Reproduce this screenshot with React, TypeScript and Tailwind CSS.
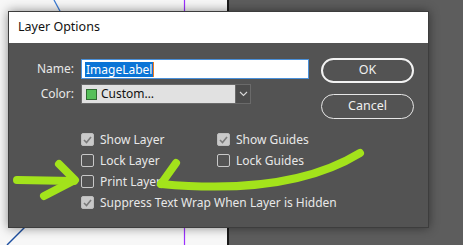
import React from "react";

function Check({ checked }: { checked: boolean }) {
  return checked ? (
    <span className="w-[13px] h-[13px] rounded-[2px] bg-[#c9c9c9] border border-[#bdbdbd] flex items-center justify-center shrink-0">
      <svg width="9" height="8" viewBox="0 0 9 8">
        <polyline points="1,4 3.5,6.5 8,1" fill="none" stroke="#7a7a7a" strokeWidth="1.6" />
      </svg>
    </span>
  ) : (
    <span className="w-[13px] h-[13px] rounded-[2px] border border-[#c8c8c8] shrink-0" />
  );
}

function Row({ checked, label }: { checked: boolean; label: string }) {
  return (
    <div className="h-[21px] flex items-center gap-[6px]">
      <Check checked={checked} />
      <span className="text-[12px] text-[#e8e8e8] leading-none whitespace-nowrap">{label}</span>
    </div>
  );
}

export default function App() {
  return (
    <div
      className="relative w-[463px] h-[245px] overflow-hidden"
      style={{ fontFamily: '"Noto Sans", "Open Sans", sans-serif' }}
    >
      <div className="flex h-full">
        <div className="w-[227px] bg-[#f7f7f7]" />
        <div className="w-[2px] bg-[#1a1a1a]" />
        <div className="flex-1 bg-[#5d5d5d]" />
      </div>
      <svg className="absolute inset-0" width="463" height="245">
        <line x1="184.5" y1="0" x2="184.5" y2="245" stroke="#9b30ff" strokeWidth="1.2" />
        <path d="M54 0 L61 13" stroke="#3a7bd5" strokeWidth="1.3" fill="none" />
        <path d="M26 226 L7 245" stroke="#1d4fa0" strokeWidth="1.4" fill="none" />
      </svg>

      <div className="absolute left-[8px] top-[11px] w-[421px] h-[217px] flex flex-col border border-[#3d3d3d] shadow-[0_0_10px_rgba(0,0,0,0.45)]">
        <div className="h-[31px] bg-white flex items-center pl-[9px] shrink-0">
          <span className="text-[12.5px] text-[#111]">Layer Options</span>
        </div>
        <div className="flex-1 bg-[#535353] flex flex-col">
          <div className="flex">
            <div className="w-[300px] flex flex-col pt-[16px]">
              <div className="flex items-center gap-[7px] h-[20px]">
                <span className="w-[65px] text-right text-[12px] text-[#e8e8e8]">Name:</span>
                <div className="w-[228px] h-[20px] bg-white border border-[#4a90d9] flex items-center pl-[3px]">
                  <span className="bg-[#0a74d6] text-white text-[12px] leading-[15px] px-[1px]">ImageLabel</span>
                  <span className="w-[1px] h-[15px] bg-[#f07a1a]" />
                </div>
              </div>
              <div className="flex items-center gap-[7px] h-[20px] mt-[5px]">
                <span className="w-[65px] text-right text-[12px] text-[#e8e8e8]">Color:</span>
                <div className="w-[170px] h-[20px] bg-[#e1e1e1] border border-[#6a6a6a] flex items-center">
                  <span className="ml-[4px] w-[11px] h-[11px] bg-[#56c05a] border border-[#2f6b31]" />
                  <span className="ml-[4px] text-[12px] text-[#111] flex-1">Custom…</span>
                  <div className="w-[15px] h-full bg-[#4c4c4c] flex items-center justify-center border-l border-[#6a6a6a]">
                    <svg width="9" height="6" viewBox="0 0 9 6">
                      <polyline points="1,1 4.5,4.5 8,1" fill="none" stroke="#d8d8d8" strokeWidth="1.1" />
                    </svg>
                  </div>
                </div>
              </div>
            </div>
            <div className="ml-[12px] pt-[15px] flex flex-col gap-[11px]">
              <div className="w-[93px] h-[25px] rounded-full border-2 border-[#f2f2f2] flex items-center justify-center text-[12.5px] text-[#f0f0f0]">
                OK
              </div>
              <div className="w-[93px] h-[25px] rounded-full border border-[#e6e6e6] flex items-center justify-center text-[12.5px] text-[#f0f0f0]">
                Cancel
              </div>
            </div>
          </div>
          <div className="pl-[72px] mt-[10px] flex flex-col">
            <div className="flex">
              <div className="w-[136px]">
                <Row checked label="Show Layer" />
                <Row checked={false} label="Lock Layer" />
              </div>
              <div>
                <Row checked label="Show Guides" />
                <Row checked={false} label="Lock Guides" />
              </div>
            </div>
            <Row checked={false} label="Print Layer" />
            <Row checked label="Suppress Text Wrap When Layer is Hidden" />
          </div>
        </div>
      </div>

      <svg className="absolute inset-0 pointer-events-none" width="463" height="245">
        <g stroke="#a3e31b" strokeWidth="8" strokeLinecap="round" strokeLinejoin="round" fill="none">
          <path d="M17 180 L74 181" />
          <path d="M59 164 L75 180 L44 196" />
          <path d="M176 163 L161 184" />
          <path d="M161 184 Q290 196 360 153" />
        </g>
      </svg>
    </div>
  );
}
